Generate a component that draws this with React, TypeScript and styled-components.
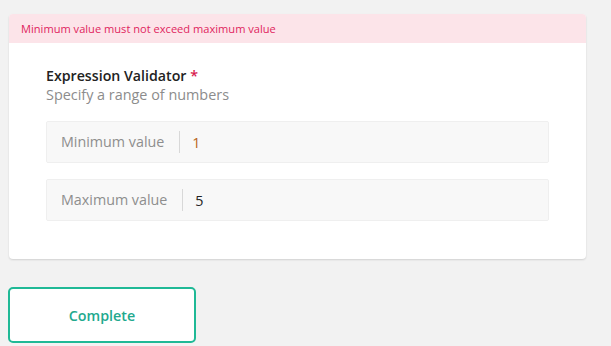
import styled, { createGlobalStyle } from "styled-components";

const GlobalStyle = createGlobalStyle`
  html, body {
    margin: 0;
    padding: 0;
    background: #f2f2f2;
    font-family: "Open Sans", "Noto Sans", sans-serif;
  }
  * {
    box-sizing: border-box;
  }
`;

const fields = [
  { label: "Minimum value", value: "1", tone: "#b8651b" },
  { label: "Maximum value", value: "5", tone: "#222" },
];

const App = () => {
  return (
    <>
      <GlobalStyle />
      <Page>
        <Card>
          <Banner>Minimum value must not exceed maximum value</Banner>
          <CardBody>
            <Title>
              Expression Validator <Required>*</Required>
            </Title>
            <Hint>Specify a range of numbers</Hint>
            <Fields>
              {fields.map((f) => (
                <Field key={f.label}>
                  <FieldLabel>{f.label}</FieldLabel>
                  <FieldValue $tone={f.tone}>{f.value}</FieldValue>
                </Field>
              ))}
            </Fields>
          </CardBody>
        </Card>
        <CompleteButton>Complete</CompleteButton>
      </Page>
    </>
  );
};

export default App;

const Page = styled.div`
  padding: 14px 25px 0 8px;
`;

const Card = styled.div`
  width: 577px;
  margin-left: 1px;
  background: #fff;
  border-radius: 4px;
  overflow: hidden;
  box-shadow: 0 1px 2px rgba(0, 0, 0, 0.14);
`;

const Banner = styled.div`
  height: 29px;
  display: flex;
  align-items: center;
  padding-left: 12px;
  background: #fce4e9;
  color: #e0245e;
  font-size: 11.1px;
`;

const CardBody = styled.div`
  padding: 23px 37px 38px 37px;
`;

const Title = styled.div`
  font-size: 14.2px;
  font-weight: 600;
  color: #222;
  line-height: 19px;
`;

const Required = styled.span`
  color: #d81b4f;
`;

const Hint = styled.div`
  font-size: 14.4px;
  color: #8c8c8c;
  line-height: 20px;
`;

const Fields = styled.div`
  margin-top: 16px;
  display: flex;
  flex-direction: column;
  gap: 16px;
`;

const Field = styled.div`
  height: 42px;
  display: flex;
  align-items: center;
  background: #f8f8f8;
  border: 1px solid #efefef;
  border-radius: 2px;
  padding-left: 14px;
`;

const FieldLabel = styled.span`
  font-size: 14.3px;
  color: #8e8e8e;
  padding-right: 15px;
  border-right: 1px solid #d8d8d8;
  line-height: 22px;
`;

const FieldValue = styled.span<{ $tone: string }>`
  font-size: 14.3px;
  color: ${(p) => p.$tone};
  padding-left: 12px;
`;

const CompleteButton = styled.button`
  margin-top: 28px;
  width: 188px;
  height: 56px;
  background: #fff;
  border: 2px solid #1fb996;
  border-radius: 5px;
  color: #22a98e;
  font-family: "Open Sans", "Noto Sans", sans-serif;
  font-size: 14.3px;
  font-weight: 600;
  cursor: pointer;
`;
